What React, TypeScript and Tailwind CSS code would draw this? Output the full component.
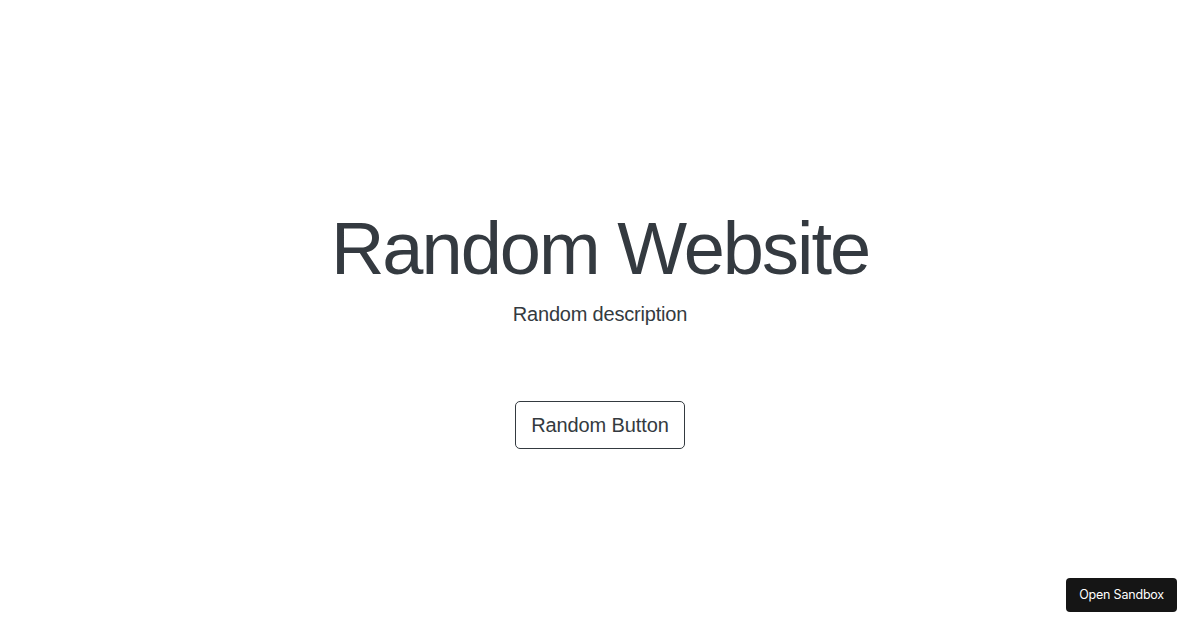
export default function App() {
  return (
    <main className="min-h-screen bg-white flex flex-col items-center justify-center text-[#343a40] font-['Liberation_Sans',Arial,sans-serif] relative">
      <div className="flex flex-col items-center pt-[24px]">
        <h1 className="text-[74px] leading-[1.2] font-normal tracking-[-2px]">Random Website</h1>
        <p className="text-[20px] leading-[1.5] mt-[5px] tracking-[-0.2px]">Random description</p>
        <button className="mt-[72px] px-[15px] py-2 text-[20px] leading-[1.5] border border-[#343a40] rounded-[5px] text-[#343a40] tracking-[-0.1px]">
          Random Button
        </button>
      </div>

      {/* sandbox link */}
      <a className="absolute bottom-[18px] right-[23px] bg-[#151515] text-white text-[12.5px] leading-[34px] h-[34px] px-[13px] rounded-[4px] font-['Inter',sans-serif] tracking-[-0.2px]">
        Open Sandbox
      </a>
    </main>
  )
}
